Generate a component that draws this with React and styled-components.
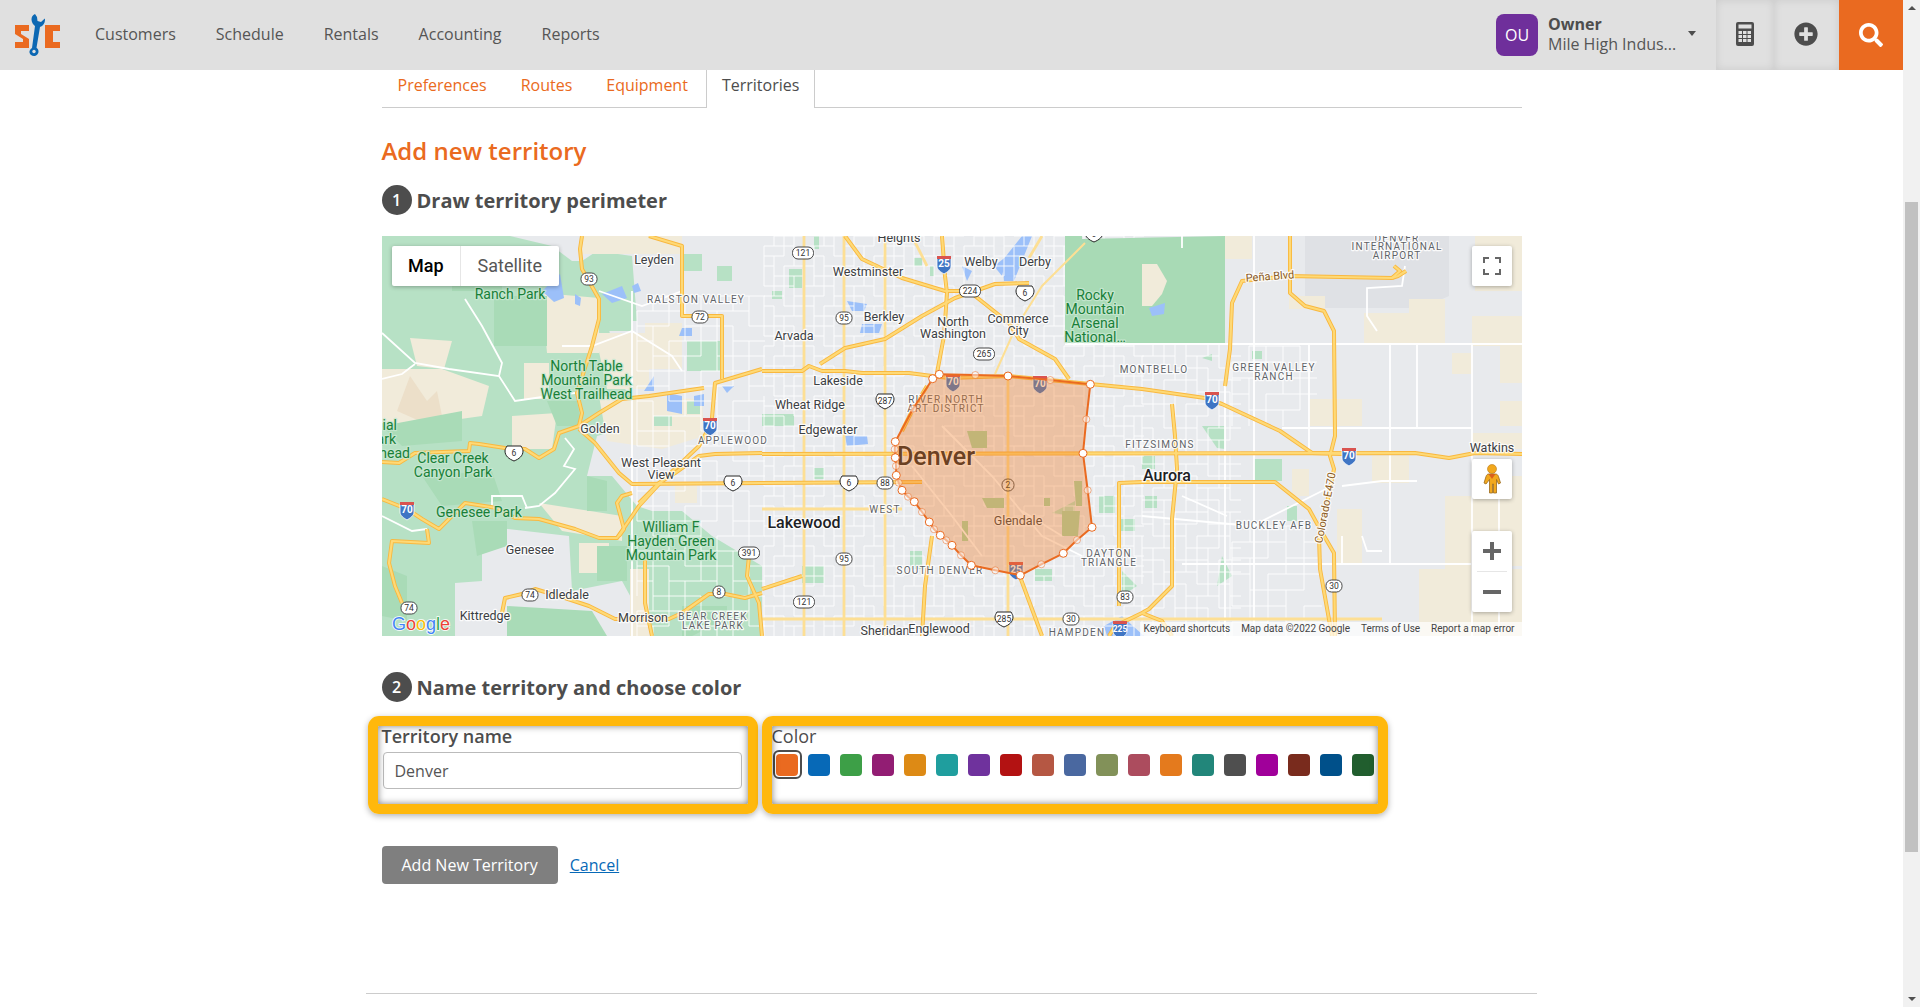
import React from 'react'
import styled, { createGlobalStyle } from 'styled-components'
import { FaPlusCircle, FaSearch } from 'react-icons/fa'

const GlobalStyle = createGlobalStyle`
  html, body {
    margin: 0;
    height: 100%;
    overflow: hidden;
    background: #fff;
    font-family: "Open Sans", sans-serif;
    color: #4d4d4d;
  }
  * { box-sizing: border-box; }
`

const ORANGE = '#ea6a20'

const swatches = [
  '#ea6a20', '#0769b7', '#3d9f47', '#921d73', '#dd8a15', '#1f9e9e', '#6f329d',
  '#b31212', '#b55743', '#4a68a0', '#829159', '#ac4c5e', '#e47a1d', '#22867a',
  '#4f4f4f', '#a0009a', '#792b1d', '#00508a', '#215e2e',
]

// map data, all in map pixels (1140 x 400)
const tan = [
  '200,0 300,0 300,18 200,18', '160,57 217,62 217,117 165,117', '213,97 267,97 267,153 225,153',
  '263,87 300,87 300,133 263,133', '217,160 320,163 322,200 280,213 225,205', '28,102 70,105 62,133 35,130',
  '0,133 60,133 107,150 100,180 50,187 0,187', '130,180 175,177 170,213 130,213', '142,127 167,127 167,163 142,163',
  '157,267 240,280 240,305 180,295', '197,307 227,307 227,337 197,337', '248,333 267,333 267,400 248,400',
  '293,250 315,250 315,267 293,267', '843,0 870,0 870,23 843,23', '1093,0 1140,0 1140,55 1093,55',
  '1090,80 1140,80 1140,110 1090,110', '1027,63 1063,63 1063,108 1027,108', '982,77 1027,77 1027,108 982,108',
  '907,60 943,60 943,73 907,73', '1037,333 1140,333 1140,400 1037,400', '1063,260 1090,260 1090,333 1063,333',
  '955,273 980,273 980,328 955,328', '927,163 980,163 980,190 927,190', '910,233 927,233 927,260 910,260',
  '1118,110 1140,110 1140,147 1118,147', '1070,117 1090,117 1090,138 1070,138', '1090,197 1140,197 1140,213 1090,213',
  '990,220 1027,220 1027,247 990,247', '1118,165 1140,165 1140,190 1118,190', '1090,240 1140,240 1140,330 1090,330',
]
const darkGreen = [
  '112,60 165,60 165,110 112,110', '0,190 80,175 80,205 20,210', '40,240 110,235 120,265 60,270',
  '165,165 195,165 200,190 175,190', '90,285 125,285 125,310 95,320', '215,310 245,310 245,345 215,345',
  '125,370 210,375 225,400 125,400', '300,370 345,370 345,400 300,400', '0,330 25,340 25,385 0,380',
  '205,240 225,245 225,275 205,275', '70,15 120,15 120,55 70,55',
]
const patches = [
  '217,70 250,75 250,95 225,95', '300,18 320,18 320,35 300,35', '305,105 340,105 340,135 305,135',
  '305,165 318,165 318,178 305,178', '335,30 350,30 350,45 335,45', '272,180 290,180 290,190 272,190',
  '407,33 420,33 420,52 407,52', '390,55 400,55 400,63 390,63', '380,178 412,178 412,190 380,190',
  '432,0 437,0 437,13 432,13', '532,22 540,22 540,30 532,30', '432,232 442,232 442,243 432,243',
  '420,330 442,330 442,347 420,347', '528,315 540,315 540,333 528,333', '653,333 670,333 670,345 653,345',
  '670,277 693,265 693,280', '717,260 733,260 733,277 717,277', '737,283 753,283 753,295 737,295',
  '740,335 755,350 740,360', '760,220 773,220 773,233 760,233', '763,260 775,260 775,272 763,272',
  '820,190 843,190 843,213 835,212', '870,115 880,115 880,123 870,123', '872,223 900,223 900,245 872,245',
  '840,320 850,340 835,350', '905,270 915,270 915,285 905,285', '820,122 830,118 830,125',
  '310,400 350,380 345,400', '548,30 552,30 552,40 548,40',
]
const parkBlocks = [
  '585,195 605,195 605,212 590,212', '600,262 622,262 622,272 605,272', '680,275 698,275 696,300 680,300',
  '580,285 586,285 586,305 580,305', '662,262 668,262 668,270 662,270', '692,245 700,245 700,270 694,270',
]
const water = [
  '178,38 182,62 172,66 160,55', '220,58 240,50 245,62 230,67', '250,50 256,47 259,55 252,57',
  '193,58 199,62 198,70 193,68', '285,157 300,160 300,178 285,175', '312,160 322,158 322,170 312,170',
  '262,155 272,140 272,155', '300,92 310,92 310,100 297,100', '340,150 352,150 345,157',
  '465,65 485,68 482,75 470,75', '480,88 500,88 497,97 478,97', '463,200 485,200 486,208 465,210',
  '620,25 640,0 650,0 632,45 622,45', '625,20 620,40 612,30', '722,390 740,380 762,400 725,400', '580,30 590,35 585,45',
]
const bigRoads = [
  '380,133 333,147 330,182 328,190 317,210 280,245 257,270 235,302 217,302 193,293 157,283 133,282 115,272 83,267 57,293 40,283 25,273 0,263',
  '322,152 267,160 240,163 217,177 197,190 177,197 172,213 157,222 143,213 123,212 97,208 88,207 87,215 33,217 17,227 0,226',
  '197,193 213,207 237,237 250,248 380,247 540,246',
  '200,0 198,13 200,33 217,63 217,83 210,110 195,157 200,177 197,190',
  '267,0 300,10 300,80 340,80 340,143',
  '380,217 333,218 317,220 293,237 277,247 257,267',
  '250,257 240,260 235,267 242,293 237,300',
  '263,323 263,367 270,400',
  '380,357 363,362 343,358 327,358 300,377 287,383 233,383 207,370 183,362 153,353 140,358 123,362 120,377',
  '367,320 365,340 377,367 380,400',
  '380,353 420,340',
  '45,293 47,307 10,305 7,327 13,350 20,367',
  '380,135 420,135 427,130 440,135 463,135 480,137 527,137 550,140 567,142 627,140 708,148 760,153 823,162 840,168 898,195 930,217 960,218',
  '380,218 1033,217 1067,222 1093,217 1140,218',
  '560,0 563,40 565,57 562,100 555,137',
  '463,0 480,23 520,42 563,55 587,55 593,60 627,87 637,103 673,123 687,143',
  '438,128 463,112 503,103 540,80 573,62 613,48 647,47',
  '637,338 660,400',
  '550,300 543,350 540,400',
  '737,370 737,247 760,246 893,246 927,273 938,293 952,317 953,400',
  '908,0 908,57 923,70 942,75 952,95 953,200 948,220 952,233 945,267 937,300 938,333 950,400',
  '843,150 848,113 850,67 860,45 907,40 1010,42 1018,35 1012,30',
  '1010,42 1016,40 1024,35',
  '790,168 793,200 795,233 790,283 790,350 767,373 760,377 733,390 727,400',
  '520,195 530,175 545,150',
  '760,377 780,385 790,400',
]
const softRoads = [
  '422,0 422,400', '462,0 462,400', '503,0 503,400', '626,140 626,400', '380,383 1000,383',
  '380,273 520,273', '660,0 647,22', '530,0 545,30',
]
const whiteRoads = [
  '0,97 33,127 67,133 117,140 133,165 167,160 193,157', '83,63 100,90 120,127 117,140', '0,143 20,138 33,128',
  '183,202 192,213 182,230 193,233 173,257 157,270 143,272', '0,280 30,295 45,293', '110,270 110,260 140,260 145,272',
  '180,110 210,110 250,95 290,120 300,135', '217,55 260,70 300,55', '250,55 250,400',
  '760,108 1140,108', '872,0 872,400', '843,150 843,400', '1008,108 1008,328', '1035,108 1035,192',
  '1090,108 1090,400', '1117,260 1117,400', '900,192 1090,192', '800,328 1090,328', '927,108 927,217',
  '760,280 870,290 950,250', '960,250 1000,245 1035,245', '1023,30 1020,50 985,52 985,80 995,95',
  '800,0 800,12', '800,260 845,280', '960,300 960,328', '980,300 985,315 1000,315', '683,108 760,108',
  '560,190 610,240 660,300 700,320', '530,230 570,280 600,320', '640,275 680,300',
]
const streetZones = [
  { x0: 255, x1: 382, y0: 60, y1: 400, sx: 16, sy: 15 },
  { x0: 382, x1: 760, y0: 0, y1: 400, sx: 10, sy: 10 },
  { x0: 760, x1: 850, y0: 108, y1: 400, sx: 11, sy: 12 },
  { x0: 850, x1: 930, y0: 110, y1: 190, sx: 17, sy: 16 },
  { x0: 850, x1: 925, y0: 290, y1: 395, sx: 18, sy: 16 },
]

// street grid with some segments left out, so it doesn't look like graph paper
function streetsPath() {
  let d = ''
  streetZones.forEach(z => {
    let i = 0
    for (let x = z.x0; x < z.x1; x += z.sx) {
      let j = 0
      for (let y = z.y0; y < z.y1; y += z.sy) {
        if ((i * 7 + j * 3) % 5 !== 0) d += `M${x} ${y}V${y + z.sy}`
        if ((i * 3 + j * 11) % 4 !== 0) d += `M${x} ${y}H${x + z.sx}`
        j++
      }
      i++
    }
  })
  return d
}

const territory = [
  [550.7, 142.7, 1], [557.3, 138.3, 1], [593.3, 139, 0], [626, 140, 1], [668.3, 144, 0], [708.3, 148.3, 1],
  [704.3, 183.3, 0], [701, 217.3, 1], [705.7, 254.3, 0], [710, 291.3, 1], [695, 304, 0], [681.3, 317.3, 1],
  [659.3, 328.3, 0], [638.3, 339.3, 1], [613.3, 334.3, 0], [589.3, 329.3, 1], [579, 319.3, 0], [570, 309.3, 1],
  [564.3, 304.3, 0], [558.3, 299.3, 1], [552, 293.3, 0], [547.3, 286, 1], [540, 276, 0], [532.3, 265.7, 1],
  [526, 260.7, 0], [520, 254.3, 1], [516.7, 246.7, 0], [514.3, 239.3, 1], [514, 230, 0], [513.3, 221.7, 1],
  [512.7, 213.3, 0], [513.3, 205.7, 1], [531, 172.7, 0],
]

const labels = [
  ['Leyden', 272, 24], ['Golden', 218, 193], ['West Pleasant', 279, 227], ['View', 279, 239], ['Genesee', 148, 314],
  ['Idledale', 185, 359], ['Kittredge', 103, 380], ['Morrison', 261, 382], ['Heights', 517, 2], ['Westminster', 486, 36],
  ['Welby', 599, 26], ['Derby', 653, 26], ['Berkley', 502, 81], ['Arvada', 412, 100], ['North', 571, 86], ['Washington', 571, 98],
  ['Commerce', 636, 83], ['City', 636, 95], ['Lakeside', 456, 145], ['Wheat Ridge', 428, 169], ['Edgewater', 446, 194],
  ['Glendale', 636, 285], ['Sheridan', 503, 395], ['Englewood', 557, 393], ['Watkins', 1110, 212],
]
const parkLabels = [
  ['Ranch Park', 128, 58], ['North Table', 204.5, 130], ['Mountain Park', 204.5, 144], ['West Trailhead', 204.5, 158],
  ['Clear Creek', 71, 222], ['Canyon Park', 71, 236], ['Genesee Park', 97, 276], ['William F', 289, 291],
  ['Hayden Green', 289, 305], ['Mountain Park', 289, 319], ['Rocky', 713, 59], ['Mountain', 713, 73], ['Arsenal', 713, 87],
  ['National…', 713, 101],
]
const cutLabels = [['ial', 15, 194], ['ark', 14, 208], ['head', 28, 222]]
const areaLabels = [
  ['RALSTON VALLEY', 314, 67], ['APPLEWOOD', 351, 208], ['BEAR CREEK', 331, 384], ['LAKE PARK', 331, 393],
  ['RIVER NORTH', 564, 167], ['ART DISTRICT', 564, 176], ['WEST', 503, 277], ['SOUTH DENVER', 558, 338],
  ['DAYTON', 727, 321], ['TRIANGLE', 727, 330], ['HAMPDEN', 695, 400], ['MONTBELLO', 772, 137], ['FITZSIMONS', 778, 212],
  ['DENVER', 1015, 6], ['INTERNATIONAL', 1015, 14], ['AIRPORT', 1015, 23], ['GREEN VALLEY', 892, 135], ['RANCH', 892, 144],
  ['BUCKLEY AFB', 892, 293],
]
const bigLabels = [['Lakewood', 422, 292], ['Aurora', 785, 245]]

const interstates = [
  ['70', 328, 189], ['70', 25, 273], ['25', 562, 27], ['70', 571, 145], ['70', 658, 147], ['25', 634, 333],
  ['225', 738, 392], ['70', 830, 163], ['70', 967, 219],
]
const usShields = [['6', 132, 217], ['6', 351, 247], ['6', 467, 247], ['6', 643, 57], ['287', 503, 165], ['285', 622, 383], ['6', 712, -2]]
const stateShields = [
  ['93', 207, 43], ['72', 318, 81], ['74', 148, 359], ['74', 27, 372], ['391', 367, 317], ['8', 337, 356], ['121', 421, 17],
  ['95', 462, 82], ['95', 462, 323], ['224', 588, 55], ['265', 602, 118], ['88', 503, 247], ['121', 422, 366], ['2', 626, 249],
  ['30', 689, 383], ['83', 743, 361], ['30', 952, 350],
]

const App = () => (
  <>
    <GlobalStyle />
    <Screen>
      <Main>
        <Header>
          <Logo />
          <NavLink>Customers</NavLink>
          <NavLink>Schedule</NavLink>
          <NavLink>Rentals</NavLink>
          <NavLink>Accounting</NavLink>
          <NavLink>Reports</NavLink>
          <Account>
            <Avatar>OU</Avatar>
            <AccountText>
              <strong>Owner</strong>
              <span>Mile High Indus...</span>
            </AccountText>
            <Caret />
          </Account>
          <HeaderButton $width={58}><CalculatorIcon /></HeaderButton>
          <HeaderButton $width={65}><FaPlusCircle size={24} /></HeaderButton>
          <SearchButton><FaSearch size={24} /></SearchButton>
        </Header>

        <Container>
          <Tabs>
            <Tab>Preferences</Tab>
            <Tab>Routes</Tab>
            <Tab>Equipment</Tab>
            <Tab $active>Territories</Tab>
          </Tabs>

          <Title>Add new territory</Title>
          <StepHeading><StepNumber>1</StepNumber>Draw territory perimeter</StepHeading>

          <MapBox>
            <TerritoryMap />
            <MapType>
              <MapTypeButton $active>Map</MapTypeButton>
              <MapTypeButton>Satellite</MapTypeButton>
            </MapType>
            <MapControl $top={10}>
              <svg width="18" height="18" viewBox="0 0 18 18" fill="none" stroke="#666" strokeWidth="2">
                <path d="M1 6V1h5M12 1h5v5M17 12v5h-5M6 17H1v-5" />
              </svg>
            </MapControl>
            <MapControl $top={223}><Pegman /></MapControl>
            <ZoomControl>
              <ZoomButton>
                <svg width="18" height="18" viewBox="0 0 18 18" fill="#666"><path d="M7 0h4v7h7v4h-7v7H7v-7H0V7h7z" /></svg>
              </ZoomButton>
              <ZoomDivider />
              <ZoomButton>
                <svg width="18" height="18" viewBox="0 0 18 18" fill="#666"><path d="M0 7h18v4H0z" /></svg>
              </ZoomButton>
            </ZoomControl>
            <Attribution>
              <span>Keyboard shortcuts</span>
              <span>Map data ©2022 Google</span>
              <span>Terms of Use</span>
              <span>Report a map error</span>
            </Attribution>
          </MapBox>

          <StepHeading $second><StepNumber>2</StepNumber>Name territory and choose color</StepHeading>

          <FieldRow>
            <Field $width={360}>
              <Highlight $left={14} $right={16} />
              <FieldLabel $bold>Territory name</FieldLabel>
              <NameInput defaultValue="Denver" readOnly />
            </Field>
            <Field $width={606}>
              <Highlight $left={10} $right={10} />
              <FieldLabel>Color</FieldLabel>
              <SwatchRow>
                {swatches.map((c, i) => (
                  <SwatchFrame key={c + i} $selected={i === 0}>
                    <Swatch $color={c} />
                  </SwatchFrame>
                ))}
              </SwatchRow>
            </Field>
          </FieldRow>

          <Actions>
            <AddButton>Add New Territory</AddButton>
            <CancelLink href="#">Cancel</CancelLink>
          </Actions>
        </Container>

        <FooterLine />
      </Main>
      <ScrollTrack>
        <ScrollArrow />
        <ScrollThumb />
        <ScrollArrow $down />
      </ScrollTrack>
    </Screen>
  </>
)

const Logo = () => (
  <LogoSvg width="46" height="42" viewBox="0 0 46 42">
    <path fill={ORANGE} d="M0 11h14v6H6v3l8 5v9H0v-6h8v-3l-8-5zM30 11h15v6h-7v11h7v6H30z" />
    <path fill="#0c68b3" d="M20 0c-2.500 1-3.500 3-3.500 5.500 0 2.500 1.500 5 3.500 6.500L17 34c-2 1.200-2.800 3-2.500 4.500.4 2 2.200 3.500 4.500 3.500s4.500-2 4.500-4.500c0-1.800-.8-3-2-3.800L25 13c3-1 5-4 5-7 0-.5 0-1-.2-1.500L26 8l-3.500-1L22 3z" />
    <circle cx="19" cy="37.500" r="1.700" fill="#e0e0e0" />
  </LogoSvg>
)

const CalculatorIcon = () => (
  <svg width="18" height="24" viewBox="0 0 18 24">
    <rect width="18" height="24" rx="2" fill="#4d4d4d" />
    <rect x="2.500" y="2.500" width="13" height="4" fill="#e0e0e0" />
    {[9, 13, 17].map(y => [2.500, 7, 11.500].map(x => (
      <rect key={`${x}-${y}`} x={x} y={y} width="3.500" height="3" fill="#e0e0e0" />
    )))}
  </svg>
)

const Pegman = () => (
  <svg width="18" height="30" viewBox="0 0 18 30">
    <circle cx="9" cy="5" r="4.500" fill="#f2a81d" stroke="#b9791a" strokeWidth=".6" />
    <path fill="#f2a81d" stroke="#9a6a1c" strokeWidth=".8" d="M5.500 10h7c1.500 0 2.500 1 3 2.500l2 6.500-2 1-2-4.500V29h-3v-9h-1v9h-3V15.500L3 20l-2-1 2-6.500C3.500 11 4.500 10 5.500 10z" />
    <path fill="#d9601d" d="M5.500 10h7L9 15z" />
  </svg>
)

const Interstate = ({ n, x, y }) => (
  <g transform={`translate(${x} ${y})`}>
    <path fill="#3f75c4" stroke="#fff" strokeWidth=".8" d="M-7-5H7V3C7 7 3 9 0 11-3 9-7 7-7 3z" />
    <path fill="#d9534f" d="M-7-7H7v3H-7z" />
    <ShieldText y="3.500" fill="#fff" fontSize={n.length > 2 ? 8.500 : 10} fontWeight="700">{n}</ShieldText>
  </g>
)

const UsShield = ({ n, x, y }) => (
  <g transform={`translate(${x} ${y})`}>
    <path fill="#fff" stroke="#222" strokeWidth="1" d="M-7-7H7C8-5 9-4 9-2 9 3 5 6 0 8-5 6-9 3-9-2-9-4-8-5-7-7z" />
    <ShieldText y="3" fill="#333" fontSize="8.500">{n}</ShieldText>
  </g>
)

const StateShield = ({ n, x, y }) => {
  const w = n.length > 2 ? 21 : n.length > 1 ? 16 : 12
  return (
    <g transform={`translate(${x} ${y})`}>
      <rect x={-w / 2} y="-6" width={w} height="12" rx="5.500" fill={n === '2' ? 'none' : '#fff'} stroke="#333" strokeWidth=".9" />
      <ShieldText y="3" fill="#333" fontSize="8.500">{n}</ShieldText>
    </g>
  )
}

const TerritoryMap = () => (
  <MapSvg viewBox="0 0 1140 400" width="1140" height="400">
    <rect width="1140" height="400" fill="#e8eaed" />
    <polygon fill="#dfe1e5" points="923,0 1067,0 1067,60 1040,72 923,72" />
    <polygon fill="#b7e1c5" points="0,0 128,0 170,10 190,25 200,25 215,15 250,20 255,85 225,85 240,150 255,165 250,190 215,200 205,240 230,240 255,270 270,275 300,275 330,300 380,330 380,400 270,400 240,345 190,355 187,300 100,290 100,345 73,347 73,400 0,400" />
    {tan.map(p => <polygon key={p} points={p} fill="#f1ebda" />)}
    <polygon fill="#ecdfc9" points="28,140 45,165 55,155 60,180 40,186 15,175" />
    {darkGreen.map(p => <polygon key={p} points={p} fill="#a9dbb7" />)}
    {patches.map(p => <polygon key={p} points={p} fill="#b7e1c5" />)}
    {water.map(p => <polygon key={p} points={p} fill="#9cc0f9" />)}
    <path d={streetsPath()} stroke="#fff" strokeWidth="1" strokeOpacity=".85" fill="none" />
    {parkBlocks.map(p => <polygon key={p} points={p} fill="#a8d6a8" />)}
    <polygon points="683,0 700,0 700,3 843,0 843,107 683,107 683,60" fill="#a8dab5" />
    <polygon points="760,28 775,28 785,45 780,58 770,70 760,70" fill="#f1ebda" />
    <polygon points="767,72 783,67 782,78 770,80" fill="#9cc0f9" />
    {whiteRoads.map(p => <polyline key={p} points={p} fill="none" stroke="#fff" strokeWidth="1.800" />)}
    {softRoads.map(p => <polyline key={p} points={p} fill="none" stroke="#fddf94" strokeWidth="2.800" />)}
    {bigRoads.map(p => <polyline key={p} points={p} fill="none" stroke="#f9b83f" strokeWidth="4" strokeLinejoin="round" />)}
    {bigRoads.map(p => <polyline key={p + 'i'} points={p} fill="none" stroke="#fed976" strokeWidth="2.200" strokeLinejoin="round" />)}
    <polyline points="703,7 660,50 633,93 613,138" fill="none" stroke="#fddf94" strokeWidth="2" />

    {interstates.map(s => <Interstate key={s.join()} n={s[0]} x={s[1]} y={s[2]} />)}
    {usShields.map(s => <UsShield key={s.join()} n={s[0]} x={s[1]} y={s[2]} />)}
    {stateShields.map(s => <StateShield key={s.join()} n={s[0]} x={s[1]} y={s[2]} />)}

    {labels.map(l => <CityLabel key={l.join()} x={l[1]} y={l[2] + 4}>{l[0]}</CityLabel>)}
    {parkLabels.map(l => <ParkLabel key={l.join()} x={l[1]} y={l[2] + 5}>{l[0]}</ParkLabel>)}
    {cutLabels.map(l => <CutLabel key={l.join()} x={l[1]} y={l[2]}>{l[0]}</CutLabel>)}
    {areaLabels.map(l => <AreaLabel key={l.join()} x={l[1]} y={l[2]}>{l[0]}</AreaLabel>)}
    {bigLabels.map(l => <BigLabel key={l.join()} x={l[1]} y={l[2]}>{l[0]}</BigLabel>)}
    <RoadLabel x="888" y="44" transform="rotate(-4 888 41)">Peña Blvd</RoadLabel>
    <RoadLabel x="944" y="275" transform="rotate(-79 944 272)">Colorado E470</RoadLabel>
    <DenverLabel x="554" y="229">Denver</DenverLabel>

    <polygon points={territory.map(p => `${p[0]},${p[1]}`).join(' ')} fill="#f07a20" fillOpacity=".36" stroke={ORANGE} strokeWidth="2" strokeLinejoin="round" />
    {territory.map(p => (
      <circle key={p.join()} cx={p[0]} cy={p[1]} r={p[2] ? 4 : 3.500} fill="#fff" fillOpacity={p[2] ? 1 : 0.5} stroke={ORANGE} strokeOpacity={p[2] ? 1 : 0.5} strokeWidth="1" />
    ))}

    <GoogleMark x="10" y="394">
      <tspan fill="#4285f4">G</tspan><tspan fill="#ea4335">o</tspan><tspan fill="#fbbc05">o</tspan>
      <tspan fill="#4285f4">g</tspan><tspan fill="#34a853">l</tspan><tspan fill="#ea4335">e</tspan>
    </GoogleMark>
  </MapSvg>
)

const Screen = styled.div`
  display: flex;
  height: 1007px;
  overflow: hidden;
`

const Main = styled.div`
  flex: 1;
  min-width: 0;
  display: flex;
  flex-direction: column;
  align-items: center;
`

const Header = styled.header`
  align-self: stretch;
  height: 70px;
  flex: none;
  display: flex;
  align-items: center;
  background: #e0e0e0;
`

const LogoSvg = styled.svg`
  flex: none;
  margin: -1px 14px 0 15px;
`

const NavLink = styled.a`
  padding: 0 20px 2px;
  font-size: 16px;
  color: #555;
`

const Account = styled.div`
  margin-left: auto;
  display: flex;
  align-items: center;
  width: 220px;
  height: 42px;
`

const Avatar = styled.div`
  width: 42px;
  height: 42px;
  flex: none;
  display: flex;
  align-items: center;
  justify-content: center;
  border-radius: 8px;
  background: #6f2f9b;
  color: #fff;
  font-size: 16px;
`

const AccountText = styled.div`
  margin: -2px 0 0 10px;
  width: 140px;
  display: flex;
  flex-direction: column;
  font-size: 16px;
  line-height: 20px;
  color: #555;
  white-space: nowrap;

  strong {
    color: #4d4d4d;
    font-weight: 700;
  }
`

const Caret = styled.div`
  margin: -4px 0 0 0;
  width: 0;
  height: 0;
  border-left: 4px solid transparent;
  border-right: 4px solid transparent;
  border-top: 5px solid #4d4d4d;
`

const HeaderButton = styled.div`
  width: ${p => p.$width}px;
  height: 70px;
  flex: none;
  display: flex;
  align-items: center;
  justify-content: center;
  padding: 0 1px 2px 0;
  color: #4d4d4d;
  box-shadow: inset 0 0 8px rgba(0, 0, 0, 0.1);
`

const SearchButton = styled.div`
  width: 64px;
  height: 70px;
  flex: none;
  display: flex;
  align-items: center;
  justify-content: center;
  background: ${ORANGE};
  color: #fff;
`

const Container = styled.main`
  width: 1140px;
  flex: none;
`

const Tabs = styled.nav`
  display: flex;
  height: 38px;
  border-bottom: 1px solid #ccc;
`

const Tab = styled.a`
  height: ${p => (p.$active ? '38px' : '37px')};
  margin-right: 2px;
  padding: 0 15px;
  padding-top: 4px;
  border: 1px solid ${p => (p.$active ? '#ccc' : 'transparent')};
  border-top: 0;
  border-bottom: 0;
  background: #fff;
  font-size: 16px;
  line-height: 22px;
  color: ${p => (p.$active ? '#4d4d4d' : ORANGE)};
`

const Title = styled.h1`
  margin: 26px 0 0;
  font-size: 24px;
  line-height: 33px;
  font-weight: 600;
  color: ${ORANGE};
`

const StepHeading = styled.h2`
  display: flex;
  align-items: center;
  gap: 5px;
  height: 30px;
  margin: ${p => (p.$second ? '36px' : '18px')} 0 0;
  font-size: 20px;
  font-weight: 700;
  color: #4d4d4d;
`

const StepNumber = styled.span`
  width: 30px;
  height: 30px;
  display: flex;
  align-items: center;
  justify-content: center;
  border-radius: 50%;
  background: #4d4d4d;
  color: #fff;
  font-size: 16px;
  font-weight: 600;
`

const MapBox = styled.div`
  position: relative;
  width: 1140px;
  height: 400px;
  margin-top: 21px;
  overflow: hidden;
`

const MapSvg = styled.svg`
  display: block;
`

const mapText = `
  font-family: Roboto, "Liberation Sans", sans-serif;
  text-anchor: middle;
  paint-order: stroke;
  stroke: #fff;
  stroke-opacity: 0.85;
  stroke-width: 2.5px;
  stroke-linejoin: round;
`

const CityLabel = styled.text`
  ${mapText}
  font-size: 12.5px;
  fill: #3c4043;
`

const ParkLabel = styled.text`
  ${mapText}
  font-size: 14px;
  fill: #188038;
  stroke: #c8e8d2;
`

const CutLabel = styled(ParkLabel)`
  text-anchor: end;
`

const AreaLabel = styled.text`
  ${mapText}
  font-size: 10px;
  letter-spacing: 1.200px;
  fill: #5f6368;
`

const BigLabel = styled.text`
  ${mapText}
  font-size: 16px;
  font-weight: 500;
  fill: #202124;
`

const DenverLabel = styled.text`
  ${mapText}
  font-size: 25px;
  font-weight: 500;
  fill: #202124;
`

const RoadLabel = styled.text`
  ${mapText}
  font-size: 11px;
  fill: #8a5a1e;
`

const ShieldText = styled.text`
  font-family: Roboto, "Liberation Sans", sans-serif;
  text-anchor: middle;
`

const GoogleMark = styled.text`
  font-family: "Liberation Sans", sans-serif;
  font-size: 18px;
  paint-order: stroke;
  stroke: #fff;
  stroke-width: 1.500px;
`

const MapType = styled.div`
  position: absolute;
  left: 10px;
  top: 10px;
  display: flex;
  height: 40px;
  background: #fff;
  border-radius: 2px;
  box-shadow: 0 1px 4px rgba(0, 0, 0, 0.3);
`

const MapTypeButton = styled.div`
  display: flex;
  align-items: center;
  padding: 0 16.5px 2px;
  font-family: Roboto, sans-serif;
  font-size: 18px;
  font-weight: ${p => (p.$active ? 500 : 400)};
  color: ${p => (p.$active ? '#000' : '#565656')};
  border-right: ${p => (p.$active ? '1px solid #e6e6e6' : '0')};
`

const MapControl = styled.div`
  position: absolute;
  right: 10px;
  top: ${p => p.$top}px;
  width: 40px;
  height: 40px;
  display: flex;
  align-items: center;
  justify-content: center;
  background: #fff;
  border-radius: 2px;
  box-shadow: 0 1px 4px rgba(0, 0, 0, 0.3);
`

const ZoomControl = styled.div`
  position: absolute;
  right: 10px;
  top: 295px;
  width: 40px;
  height: 81px;
  display: flex;
  flex-direction: column;
  align-items: center;
  background: #fff;
  border-radius: 2px;
  box-shadow: 0 1px 4px rgba(0, 0, 0, 0.3);
`

const ZoomButton = styled.div`
  height: 40px;
  display: flex;
  align-items: center;
  justify-content: center;
`

const ZoomDivider = styled.div`
  width: 30px;
  height: 1px;
  background: #e6e6e6;
`

const Attribution = styled.div`
  position: absolute;
  right: 0;
  bottom: 0;
  width: 382px;
  height: 14px;
  display: flex;
  justify-content: space-between;
  padding: 0 7px 0 4px;
  background: rgba(255, 255, 255, 0.7);
  font-family: Roboto, sans-serif;
  font-size: 10px;
  line-height: 14px;
  color: #444;
`

const FieldRow = styled.div`
  display: flex;
  gap: 30px;
  margin-top: 15px;
`

const Field = styled.div`
  position: relative;
  width: ${p => p.$width}px;
  height: 78px;
  margin-top: 9px;
`

const Highlight = styled.div`
  position: absolute;
  top: -10px;
  bottom: -10px;
  left: -${p => p.$left}px;
  right: -${p => p.$right}px;
  border: 10px solid #ffb80c;
  border-radius: 11px;
  pointer-events: none;
  box-shadow: inset 0 0 7px rgba(0, 0, 0, 0.5), 0 2px 6px rgba(0, 0, 0, 0.3);
`

const FieldLabel = styled.div`
  font-size: 18px;
  line-height: 20px;
  font-weight: ${p => (p.$bold ? 600 : 500)};
  color: #4d4d4d;
`

const NameInput = styled.input`
  display: block;
  width: 359px;
  height: 37px;
  margin: 6px 0 0 1px;
  padding: 0 11px;
  border: 1px solid #bbb;
  border-radius: 4px;
  font-family: "Open Sans", sans-serif;
  font-size: 16px;
  color: #555;
  outline: none;
`

const SwatchRow = styled.div`
  display: flex;
  gap: 3px;
  margin: 4px 0 0 1px;
`

const SwatchFrame = styled.div`
  width: 29px;
  height: 29px;
  flex: none;
  display: flex;
  align-items: center;
  justify-content: center;
  border: 2px solid ${p => (p.$selected ? '#4d4d4d' : 'transparent')};
  border-radius: 6px;
`

const Swatch = styled.div`
  width: 22px;
  height: 22px;
  border-radius: 4px;
  background: ${p => p.$color};
`

const Actions = styled.div`
  display: flex;
  align-items: center;
  gap: 12px;
  margin-top: 42px;
`

const AddButton = styled.button`
  height: 38px;
  padding: 0 20px;
  border: 0;
  border-radius: 4px;
  background: #7f7f7f;
  color: #fff;
  font-family: "Open Sans", sans-serif;
  font-size: 16px;
`

const CancelLink = styled.a`
  font-size: 16px;
  color: #0769b7;
`

const FooterLine = styled.div`
  width: 1171px;
  flex: none;
  margin-top: 109px;
  border-top: 1px solid #ccc;
`

const ScrollTrack = styled.div`
  width: 17px;
  flex: none;
  display: flex;
  flex-direction: column;
  align-items: center;
  background: #f1f1f1;
`

const ScrollArrow = styled.div`
  width: 0;
  height: 0;
  margin: ${p => (p.$down ? 'auto 0 6px' : '6px 0 0')};
  border-left: 4px solid transparent;
  border-right: 4px solid transparent;
  border-${p => (p.$down ? 'top' : 'bottom')}: 4px solid #505050;
`

const ScrollThumb = styled.div`
  width: 13px;
  height: 650px;
  margin-top: 192px;
  background: #c1c1c1;
`

export default App
